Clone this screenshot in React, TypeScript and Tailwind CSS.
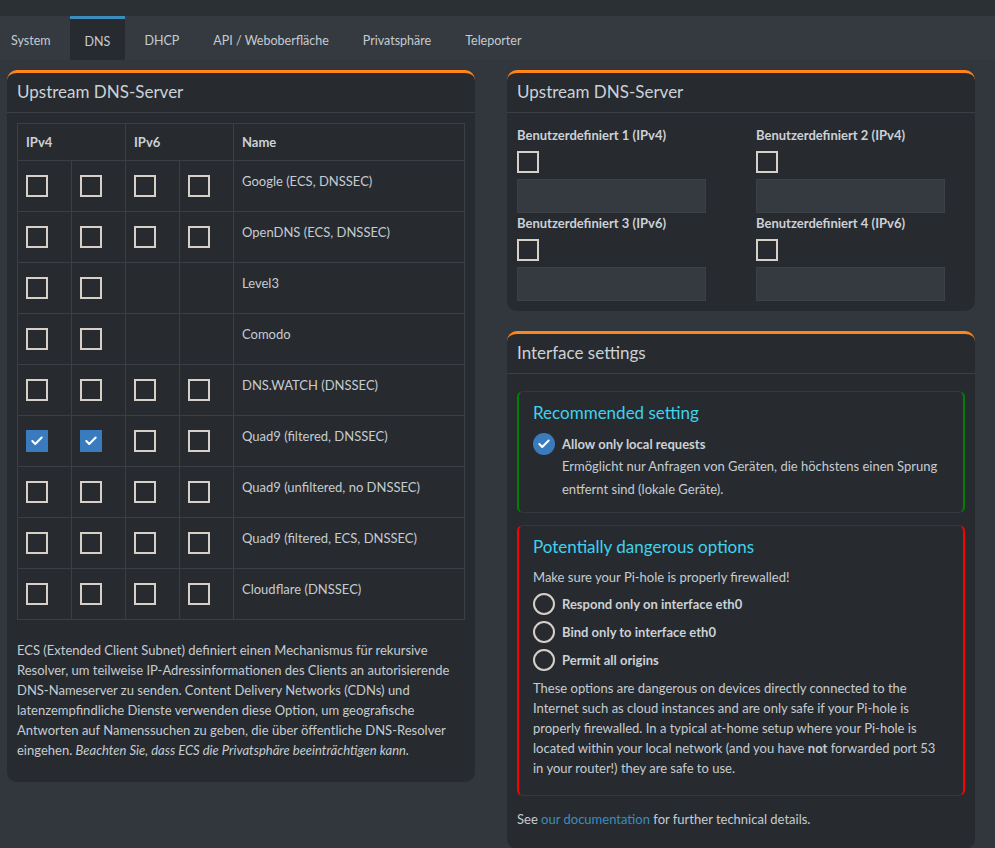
import { Check } from "lucide-react";

const servers = [
  { name: "Google (ECS, DNSSEC)", v6: true, checked: false },
  { name: "OpenDNS (ECS, DNSSEC)", v6: true, checked: false },
  { name: "Level3", v6: false, checked: false },
  { name: "Comodo", v6: false, checked: false },
  { name: "DNS.WATCH (DNSSEC)", v6: true, checked: false },
  { name: "Quad9 (filtered, DNSSEC)", v6: true, checked: true },
  { name: "Quad9 (unfiltered, no DNSSEC)", v6: true, checked: false },
  { name: "Quad9 (filtered, ECS, DNSSEC)", v6: true, checked: false },
  { name: "Cloudflare (DNSSEC)", v6: true, checked: false },
];

const tabs = ["System", "DNS", "DHCP", "API / Weboberfläche", "Privatsphäre", "Teleporter"];

function Box({ checked = false }: { checked?: boolean }) {
  if (checked) {
    return (
      <div className="w-[22px] h-[22px] bg-[#3a7bbd] flex items-center justify-center">
        <Check size={14} strokeWidth={3.5} className="text-white" />
      </div>
    );
  }
  return <div className="w-[22px] h-[22px] border-2 border-[#d6d0c8]" />;
}

function Radio() {
  return <div className="w-[22px] h-[22px] rounded-full border-2 border-[#d6d0c8] shrink-0" />;
}

function Card({ title, children }: { title: string; children: React.ReactNode }) {
  return (
    <div className="bg-[#272b30] rounded-[10px] border-t-[3px] border-[#ff851b]">
      <div className="h-[40px] px-[10px] flex items-center pb-[2px] border-b border-[#3a3f45] text-[17px] text-[#ccd1d6]">
        {title}
      </div>
      {children}
    </div>
  );
}

export default function App() {
  return (
    <div className="min-h-screen bg-[#31373d] text-[#c6cbd0] text-[13px] leading-[20px] font-['Source_Sans_Pro','Lato',sans-serif]">
      <div className="h-[16px] bg-[#2b3035]" />
      <div className="flex h-[44px] bg-[#343a40] text-[12.5px]">
        {tabs.map((t, i) => (
          <div
            key={t}
            className={
              t === "DNS"
                ? "h-[44px] px-[15px] flex items-center pt-[5px] bg-[#272b30] border-t-[3px] border-[#3c8dbc] text-[#c6cbd0] mr-[4px]"
                : i === 0
                ? "h-[44px] pl-[11px] pr-[19px] flex items-center pt-[5px] text-[#c6cbd0]"
                : "h-[44px] px-[15px] flex items-center pt-[5px] text-[#c6cbd0] mr-[4px]"
            }
          >
            {t}
          </div>
        ))}
      </div>

      <div className="flex gap-[32px] pl-[7px] pt-[10px] items-start">
        <div className="w-[468px] shrink-0">
          <Card title="Upstream DNS-Server">
            <div className="p-[10px] pb-[22px]">
              <table className="w-full border-collapse border border-[#3a3f45]">
                <thead>
                  <tr className="h-[37px]">
                    <th colSpan={2} className="border border-[#3a3f45] text-left px-[8px] font-bold text-[#ccd1d6]">IPv4</th>
                    <th colSpan={2} className="border border-[#3a3f45] text-left px-[8px] font-bold text-[#ccd1d6]">IPv6</th>
                    <th className="border border-[#3a3f45] text-left px-[8px] font-bold text-[#ccd1d6]">Name</th>
                  </tr>
                </thead>
                <tbody>
                  {servers.map((s) => (
                    <tr key={s.name} className="h-[51px]">
                      <td className="w-[54px] border border-[#3a3f45] align-top pl-[8px] pt-[14px]"><Box checked={s.checked} /></td>
                      <td className="w-[54px] border border-[#3a3f45] align-top pl-[8px] pt-[14px]"><Box checked={s.checked} /></td>
                      <td className="w-[54px] border border-[#3a3f45] align-top pl-[8px] pt-[14px]">{s.v6 && <Box />}</td>
                      <td className="w-[54px] border border-[#3a3f45] align-top pl-[8px] pt-[14px]">{s.v6 && <Box />}</td>
                      <td className="border border-[#3a3f45] align-top px-[8px] pt-[10px]">{s.name}</td>
                    </tr>
                  ))}
                </tbody>
              </table>
              <p className="mt-[20px]">
                ECS (Extended Client Subnet) definiert einen Mechanismus für rekursive Resolver, um teilweise
                IP-Adressinformationen des Clients an autorisierende DNS-Nameserver zu senden. Content Delivery
                Networks (CDNs) und latenzempfindliche Dienste verwenden diese Option, um geografische Antworten auf
                Namenssuchen zu geben, die über öffentliche DNS-Resolver eingehen.{" "}
                <em>Beachten Sie, dass ECS die Privatsphäre beeinträchtigen kann.</em>
              </p>
            </div>
          </Card>
        </div>

        <div className="w-[468px] shrink-0 flex flex-col gap-[20px]">
          <Card title="Upstream DNS-Server">
            <div className="grid grid-cols-[239px_1fr] px-[10px] pt-[12px] pb-[10px]">
              {[1, 2, 3, 4].map((n) => (
                <div key={n} className="flex flex-col">
                  <div className="font-bold text-[#ccd1d6]">
                    Benutzerdefiniert {n} ({n < 3 ? "IPv4" : "IPv6"})
                  </div>
                  <div className="mt-[6px]"><Box /></div>
                  <div className="mt-[6px] w-[189px] h-[34px] bg-[#343a40] border border-[#3b4147]" />
                </div>
              ))}
            </div>
          </Card>

          <Card title="Interface settings">
            <div className="px-[10px] pt-[17px] pb-[20px]">
              <div className="rounded-[6px] border border-[#33383e] border-x-2 border-x-[#008000] px-[14px] pt-[9px] pb-[11px]">
                <div className="text-[17px] leading-[24px] text-[#3fd2ec]">Recommended setting</div>
                <div className="flex gap-[7px] mt-[8px]">
                  <div className="w-[22px] h-[22px] rounded-full bg-[#3a7bbd] flex items-center justify-center shrink-0">
                    <Check size={14} strokeWidth={3.5} className="text-white" />
                  </div>
                  <div>
                    <div className="font-bold text-[#ccd1d6] leading-[22px]">Allow only local requests</div>
                    <div className="leading-[23px]">
                      Ermöglicht nur Anfragen von Geräten, die höchstens einen Sprung entfernt sind (lokale Geräte).
                    </div>
                  </div>
                </div>
              </div>

              <div className="mt-[12px] rounded-[6px] border border-[#33383e] border-x-2 border-x-[#ff0000] px-[14px] pt-[9px] pb-[17px]">
                <div className="text-[17px] leading-[24px] text-[#3fd2ec]">Potentially dangerous options</div>
                <div className="mt-[8px]">Make sure your Pi-hole is properly firewalled!</div>
                <div className="flex flex-col gap-[6px] mt-[6px]">
                  {["Respond only on interface eth0", "Bind only to interface eth0", "Permit all origins"].map((r) => (
                    <div key={r} className="flex items-center gap-[7px]">
                      <Radio />
                      <span className="font-bold text-[#ccd1d6]">{r}</span>
                    </div>
                  ))}
                </div>
                <p className="mt-[7px]">
                  These options are dangerous on devices directly connected to the Internet such as cloud instances and
                  are only safe if your Pi-hole is properly firewalled. In a typical at-home setup where your Pi-hole is
                  located within your local network (and you have <b>not</b> forwarded port 53 in your router!) they
                  are safe to use.
                </p>
              </div>

              <p className="mt-[13px]">
                See <span className="text-[#3c8dbc]">our documentation</span> for further technical details.
              </p>
            </div>
          </Card>
        </div>
      </div>
    </div>
  );
}
